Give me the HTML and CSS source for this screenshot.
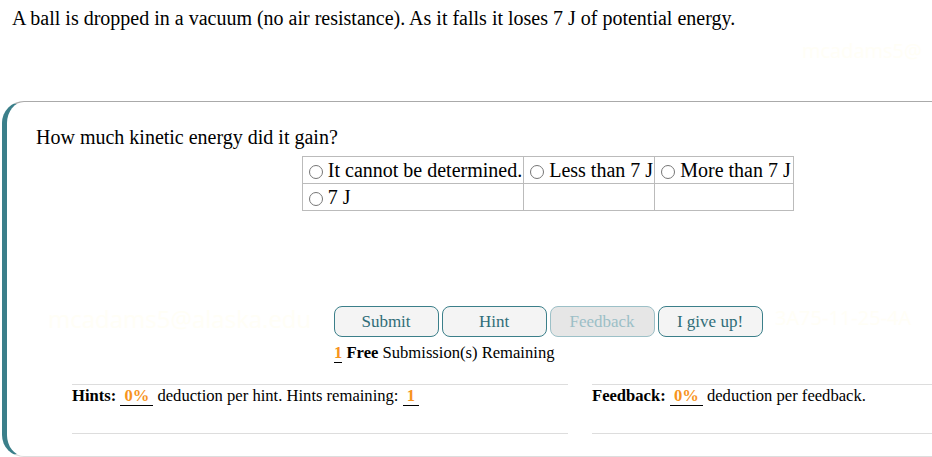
FILE: index.html
```html
<!DOCTYPE html>
<html>
<head>
<meta charset="utf-8">
<link rel="stylesheet" href="styles.css">
</head>
<body>
<p class="intro">A ball is dropped in a vacuum (no air resistance). As it falls it loses 7 J of potential energy.</p>
<div class="watermark wm-top">mcadams5@</div>
<div class="card">
  <div class="content">
    <p class="question">How much kinetic energy did it gain?</p>
    <div class="choices">
      <table class="answers">
        <tr>
          <td><label><input type="radio" name="a"> It cannot be determined.</label></td>
          <td><label><input type="radio" name="a"> Less than 7 J</label></td>
          <td><label><input type="radio" name="a"> More than 7 J</label></td>
        </tr>
        <tr>
          <td><label><input type="radio" name="a"> 7 J</label></td>
          <td></td>
          <td></td>
        </tr>
      </table>
    </div>
    <div class="actions">
      <div class="watermark wm-left">mcadams5@alaska.edu</div>
      <div class="buttons">
        <button class="btn">Submit</button>
        <button class="btn">Hint</button>
        <button class="btn disabled" disabled>Feedback</button>
        <button class="btn">I give up!</button>
      </div>
      <div class="watermark wm-right">3A75-11-25-4A</div>
    </div>
    <div class="remaining"><span class="num">1</span> <b>Free</b> Submission(s) Remaining</div>
  </div>
  <div class="meta">
    <div class="meta-box"><b>Hints:</b> <span class="num pad">0%</span> deduction per hint. Hints remaining: <span class="num pad">1</span></div>
    <div class="meta-box"><b>Feedback:</b> <span class="num pad">0%</span> deduction per feedback.</div>
  </div>
</div>
</body>
</html>
```
FILE: styles.css
```css
html, body {
  margin: 0;
  padding: 0;
  overflow: hidden;
  background: #fff;
}
body {
  font-family: "Liberation Serif", "Times New Roman", serif;
  color: #000;
  width: 932px;
  height: 457px;
  position: relative;
}
.intro {
  margin: 0;
  padding: 7px 0 0 12px;
  font-size: 20px;
  line-height: 23px;
  height: 72px;
}
.card {
  margin-left: 2px;
  margin-top: 22px;
  width: 1160px;
  height: 356px;
  border-left: 5px solid #3b7f8a;
  border-top: 1px solid #aaa;
  border-bottom: 1px solid #ddd;
  border-radius: 22px 0 0 22px;
  box-sizing: border-box;
}
.content {
  width: 1024px;
  padding-left: 29px;
  padding-top: 24px;
}
.question {
  margin: 0;
  font-size: 20px;
  line-height: 23px;
}
.choices {
  display: flex;
  justify-content: center;
  margin-top: 7px;
}
.answers {
  border-collapse: collapse;
  font-size: 20px;
}
.answers td {
  border: 1px solid #bbb;
  padding: 2px 1px;
  height: 22px;
  white-space: nowrap;
  line-height: 22px;
}
.answers td:nth-child(2) { min-width: 128px; }
.answers td:nth-child(3) { min-width: 136px; }
.answers input {
  margin: 0 0 0 5px;
  width: 14px;
  height: 14px;
  vertical-align: -2px;
}
.actions {
  position: relative;
  display: flex;
  justify-content: center;
  margin-top: 95px;
}
.buttons {
  display: flex;
  gap: 3px;
}
.btn {
  font-family: "Liberation Serif", "Times New Roman", serif;
  font-size: 17px;
  width: 105px;
  height: 31px;
  border: 1px solid #3b7f8a;
  border-radius: 8px;
  background: #f4f4f4;
  color: #2f6d78;
  padding: 0;
}
.btn.disabled {
  border-color: #9cc0c7;
  background: #e6e6e6;
  color: #9cbfc7;
}
.remaining {
  margin-top: 6px;
  padding-left: 298px;
  font-size: 16.6px;
  line-height: 19px;
}
.num {
  color: #f7941d;
  font-weight: bold;
  border-bottom: 1px solid #000;
}
.num.pad {
  padding: 0 4px;
}
.meta {
  display: grid;
  grid-template-columns: 496px 496px;
  gap: 24px;
  margin-left: 65px;
  margin-top: 22px;
}
.meta-box {
  border-top: 1px solid #ddd;
  border-bottom: 1px solid #ddd;
  font-size: 16.6px;
  line-height: 19px;
  padding-top: 1px;
  box-sizing: border-box;
  height: 50px;
}
.watermark {
  font-family: "Open Sans", sans-serif;
  font-size: 24px;
  color: #fffef6;
  white-space: nowrap;
}
.wm-top {
  position: absolute;
  left: 802px;
  top: 37px;
  font-size: 20px;
}
.wm-left {
  position: absolute;
  left: 12px;
  top: -4px;
}
.wm-right {
  position: absolute;
  left: 739px;
  top: -2px;
  font-size: 20px;
}
```
